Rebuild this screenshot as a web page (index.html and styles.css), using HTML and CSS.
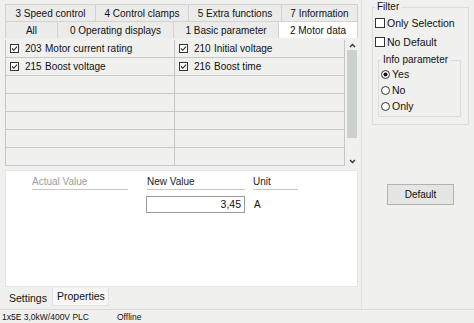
FILE: index.html
```html
<html>

<head>
    <title>Parameter</title>

    <link rel="stylesheet" href="styles.css">

</head>

<body>

    <div class="app">
        <div class="main">

            <div class="left">

                <div class="tabrow row1">
                    <div class="tab">3 Speed control</div>
                    <div class="tab">4 Control clamps</div>
                    <div class="tab">5 Extra functions</div>
                    <div class="tab">7 Information</div>
                </div>
                <div class="tabrow row2">
                    <div class="tab">All</div>
                    <div class="tab">0 Operating displays</div>
                    <div class="tab">1 Basic parameter</div>
                    <div class="tab active">2 Motor data</div>
                </div>

                <div class="list">
                    <div class="table">
                        <div class="trow">
                            <div class="cell"><span class="box"><svg width="9" height="9" viewBox="0 0 9 9"><rect x="0.5" y="0.5" width="8" height="8" fill="#fff" stroke="#333"/><polyline points="2,4.5 3.8,6.3 7,2.6" fill="none" stroke="#222" stroke-width="1.1"/></svg></span><span class="num">203</span>Motor current rating</div>
                            <div class="cell"><span class="box"><svg width="9" height="9" viewBox="0 0 9 9"><rect x="0.5" y="0.5" width="8" height="8" fill="#fff" stroke="#333"/><polyline points="2,4.5 3.8,6.3 7,2.6" fill="none" stroke="#222" stroke-width="1.1"/></svg></span><span class="num">210</span>Initial voltage</div>
                        </div>
                        <div class="trow">
                            <div class="cell"><span class="box"><svg width="9" height="9" viewBox="0 0 9 9"><rect x="0.5" y="0.5" width="8" height="8" fill="#fff" stroke="#333"/><polyline points="2,4.5 3.8,6.3 7,2.6" fill="none" stroke="#222" stroke-width="1.1"/></svg></span><span class="num">215</span>Boost voltage</div>
                            <div class="cell"><span class="box"><svg width="9" height="9" viewBox="0 0 9 9"><rect x="0.5" y="0.5" width="8" height="8" fill="#fff" stroke="#333"/><polyline points="2,4.5 3.8,6.3 7,2.6" fill="none" stroke="#222" stroke-width="1.1"/></svg></span><span class="num">216</span>Boost time</div>
                        </div>
                        <div class="trow"><div class="cell"></div><div class="cell"></div></div>
                        <div class="trow"><div class="cell"></div><div class="cell"></div></div>
                        <div class="trow"><div class="cell"></div><div class="cell"></div></div>
                        <div class="trow"><div class="cell"></div><div class="cell"></div></div>
                        <div class="trow"><div class="cell"></div><div class="cell"></div></div>
                    </div>
                    <div class="scrollbar">
                        <div class="arrow"><svg width="7" height="5" viewBox="0 0 7 5"><polyline points="1,4 3.5,1.5 6,4" fill="none" stroke="#333" stroke-width="1.3"/></svg></div>
                        <div class="thumb"></div>
                        <div class="track"></div>
                        <div class="arrow"><svg width="7" height="5" viewBox="0 0 7 5"><polyline points="1,1 3.5,3.5 6,1" fill="none" stroke="#333" stroke-width="1.3"/></svg></div>
                    </div>
                </div>

                <div class="editor">
                    <div class="fields">
                        <div class="field f-actual">
                            <div class="label dim">Actual Value</div>
                        </div>
                        <div class="field f-new">
                            <div class="label">New Value</div>
                            <div class="input">3,45</div>
                        </div>
                        <div class="field f-unit">
                            <div class="label">Unit</div>
                            <div class="unit">A</div>
                        </div>
                    </div>
                </div>

                <div class="btabs">
                    <div class="btab">Settings</div>
                    <div class="btab raised">Properties</div>
                </div>

            </div>

            <div class="right">
                <fieldset class="group outer">
                    <legend>Filter</legend>
                    <div class="chk"><span class="cbox"></span>Only Selection</div>
                    <div class="chk"><span class="cbox"></span>No Default</div>
                    <fieldset class="group inner">
                        <legend>Info parameter</legend>
                        <div class="radio"><svg width="9" height="9" viewBox="0 0 9 9"><circle cx="4.5" cy="4.5" r="4" fill="#fff" stroke="#333"/><circle cx="4.5" cy="4.5" r="2" fill="#111"/></svg>Yes</div>
                        <div class="radio"><svg width="9" height="9" viewBox="0 0 9 9"><circle cx="4.5" cy="4.5" r="4" fill="#fff" stroke="#333"/></svg>No</div>
                        <div class="radio"><svg width="9" height="9" viewBox="0 0 9 9"><circle cx="4.5" cy="4.5" r="4" fill="#fff" stroke="#333"/></svg>Only</div>
                    </fieldset>
                </fieldset>

                <button class="default">Default</button>
            </div>

        </div>

        <div class="status">
            <div class="sb-device">1x5E 3,0kW/400V PLC</div>
            <div class="sb-state">Offline</div>
        </div>
    </div>

</body>

</html>
```

FILE: styles.css
```css
body {
    margin: 0;
    width: 474px;
    height: 323px;
    overflow: hidden;
    background: #f0f0ee;
    font-family: "Liberation Sans", Arial, sans-serif;
    font-size: 10px;
    color: #111;
}

.app {
    display: grid;
    grid-template-rows: 309px 14px;
    height: 323px;
}

.main {
    display: grid;
    grid-template-columns: 362px 1fr;
}

.left {
    padding: 4px 3px 0 5px;
    border-right: 1px solid #e2e2df;
    display: flex;
    flex-direction: column;
}

/* tabs */

.tabrow {
    display: grid;
    height: 17px;
    border-right: 1px solid #d2d2d0;
}

.row1 {
    grid-template-columns: 90px 93px 93px 1fr;
}

.row2 {
    grid-template-columns: 52px 116px 105px 1fr;
}

.tab {
    display: flex;
    align-items: center;
    justify-content: center;
    background: #ebebe9;
    border-left: 1px solid #d2d2d0;
    border-top: 1px solid #d2d2d0;
}

.tab.active {
    background: #fff;
}

/* parameter list */

.list {
    margin-top: 2px;
    height: 126px;
    display: grid;
    grid-template-columns: 1fr 13px;
}

.table {
    border-left: 1px solid #c6c6c4;
    border-right: 1px solid #c6c6c4;
}

.trow {
    display: grid;
    grid-template-columns: 169px 1fr;
    height: 18px;
    box-sizing: border-box;
    border-bottom: 1px solid #c8c8c6;
}

.cell {
    display: flex;
    align-items: center;
    padding-left: 4px;
}

.cell:first-child {
    border-right: 1px solid #c6c6c4;
}

.box {
    display: flex;
    width: 15px;
}

.num {
    width: 20px;
}

.scrollbar {
    display: flex;
    flex-direction: column;
    padding-left: 1px;
}

.arrow {
    height: 10px;
    display: flex;
    align-items: center;
    justify-content: center;
}

.thumb {
    height: 88px;
    margin: 0 1px;
    background: #cdd1cc;
}

.track {
    flex: 1;
}

/* editor */

.editor {
    margin-top: 4px;
    height: 117px;
    box-sizing: border-box;
    background: #fff;
    border: 1px solid #e4e4e2;
    padding: 5px 0 0 26px;
}

.fields {
    display: flex;
}

.label {
    line-height: 12px;
    padding-bottom: 1px;
    border-bottom: 1px solid #c8c8c6;
    color: #222;
}

.label.dim {
    color: #9c9c9a;
}

.f-actual {
    width: 96px;
    margin-right: 19px;
}

.f-new {
    width: 98px;
    margin-right: 8px;
}

.f-unit {
    width: 45px;
}

.input {
    margin: 6px 0 0 -1px;
    height: 17px;
    box-sizing: border-box;
    border: 1px solid #9a9a98;
    text-align: right;
    padding-right: 3px;
    line-height: 15px;
    font-size: 10.5px;
}

.unit {
    margin-top: 6px;
    line-height: 17px;
    padding-left: 1px;
}

/* bottom tabs */

.btabs {
    height: 20px;
    display: flex;
}

.btab {
    padding: 5px 5px 0 4px;
    font-size: 10.5px;
}

.btab.raised {
    margin-top: 1px;
    height: 15px;
    padding: 2px 3px 0 4px;
    background: #f6f6f4;
    border: 1px solid #e2e2e0;
    border-top: none;
}

/* filter */

.right {
    padding: 1px 0 0 10px;
}

.group {
    margin: 0;
    border: 1px solid #dcdcd8;
    padding: 0 0 0 2px;
}

.group legend {
    padding: 0 2px;
    line-height: 12px;
}

.outer {
    width: 97px;
    box-sizing: border-box;
    padding-bottom: 7px;
}

.chk {
    height: 19px;
    display: flex;
    align-items: center;
    font-size: 10.5px;
}

.cbox {
    width: 8px;
    height: 8px;
    border: 1px solid #333;
    background: #fff;
    margin-right: 2px;
}

.inner {
    margin: 3px 7px 0 3px;
    padding: 0 0 2px 2px;
}

.radio {
    height: 16px;
    display: flex;
    align-items: center;
    font-size: 10.5px;
}

.radio svg {
    margin-right: 2px;
}

.default {
    display: block;
    margin: 59px 0 0 15px;
    width: 67px;
    height: 21px;
    background: #e5e6e3;
    border: 1px solid #b2b2b0;
    font-family: inherit;
    font-size: 10px;
    color: #111;
}

/* status bar */

.status {
    display: flex;
    align-items: center;
    border-top: 1px solid #dadad8;
    font-size: 8.5px;
}

.sb-device {
    width: 115px;
    padding-left: 2px;
}
```
